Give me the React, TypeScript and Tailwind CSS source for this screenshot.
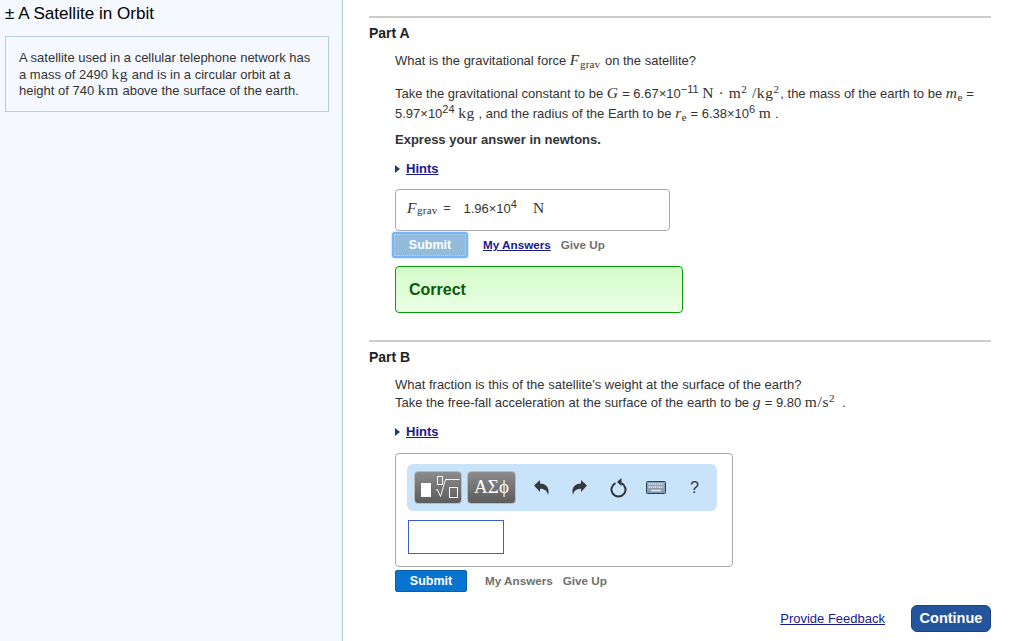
const serif = "font-['Liberation_Serif',serif]"

function M({ children, className = "" }: { children: React.ReactNode; className?: string }) {
  return <span className={`${serif} text-[15.5px] leading-none tracking-[0.6px] ${className}`}>{children}</span>
}

function Sup({ children }: { children: React.ReactNode }) {
  return <sup className="text-[11px] leading-none">{children}</sup>
}

function Sub({ children }: { children: React.ReactNode }) {
  return <sub className={`${serif} text-[11px] leading-none tracking-[0.2px]`}>{children}</sub>
}

function Hints({ className = "" }: { className?: string }) {
  return (
    <div className={`flex items-center font-bold text-[13px] leading-[16px] ${className}`}>
      <svg width="5" height="8" viewBox="0 0 5 8" className="mr-[6px]"><path d="M0 0l5 4-5 4z" fill="#1f3f66" /></svg>
      <a className="text-[#1a1a8c] underline">Hints</a>
    </div>
  )
}

function Undo({ flip = false }: { flip?: boolean }) {
  return (
    <svg width="15" height="15" viewBox="0 0 15 15" className={flip ? "-scale-x-100" : ""}>
      <path d="M0 5.500 6 0v3.400c5 0 8.600 3 8.600 8.100 0 1.200-.3 2.500-.7 3.500-.5-4.200-3.400-6.300-7.900-6.300v3.200z" fill="#333a40" />
    </svg>
  )
}

function MathButton({ children, className = "" }: { children: React.ReactNode; className?: string }) {
  return (
    <div className={`flex h-[33px] items-center justify-center rounded-[4px] border border-[#bbb] bg-gradient-to-b from-[#8c8c8c] to-[#5c5c5c] ${className}`}>
      {children}
    </div>
  )
}

export default function App() {
  return (
    <div className="flex h-[641px] w-[1014px] overflow-hidden bg-white font-['Liberation_Sans',sans-serif] text-[13px] text-[#333]">
      <aside className="w-[343px] shrink-0 border-r border-[#b5cde0] bg-[#f5f9ff] pl-[5px]">
        <h1 className="pt-[5px] text-[17.1px] leading-[18px] text-black">± A Satellite in Orbit</h1>
        <div className="mt-[13px] h-[76px] w-[324px] border border-[#b5cde0] pl-[13px] pt-[13px] leading-[15.5px]">
          A satellite used in a cellular telephone network has<br />
          a mass of 2490 <M>kg</M> and is in a circular orbit at a<br />
          height of 740 <M>km</M> above the surface of the earth.
        </div>
      </aside>

      <main className="w-[648px] pl-[26px] pt-[16px]">
        <section className="border-t-2 border-[#ccc] pt-[7px]">
          <h2 className="text-[14px] font-bold leading-[16px] text-[#222]">Part A</h2>
          <div className="pl-[26px]">
            <p className="mt-[10px] h-[20px] leading-[20px]">
              What is the gravitational force <M className="italic">F</M><Sub>grav</Sub> <span className="ml-[1px]">on the satellite?</span>
            </p>
            <p className="mt-[13px] w-[590px] leading-[20px]">
              Take the gravitational constant to be <M className="italic">G</M> = 6.67×10<Sup>−11</Sup> <M>N · m<Sup>2</Sup> /kg<Sup>2</Sup></M> <span className="-ml-[3px]">, the mass of the earth to be</span> <M className="italic">m</M><Sub>e</Sub> =<br />
              5.97×10<Sup>24</Sup> <M>kg</M> , and the radius of the Earth to be <M className="italic">r</M><Sub>e</Sub> = 6.38×10<Sup>6</Sup> <M>m</M> .
            </p>
            <p className="mt-[8px] font-bold leading-[16px]">Express your answer in newtons.</p>
            <Hints className="mt-[13px]" />
            <div className="mt-[12px] flex h-[42px] w-[275px] items-center rounded-[4px] border border-[#aaa] pb-[4px] pl-[11px]">
              <M className="italic">F</M><Sub>grav</Sub>
              <span className="ml-[6px] w-[20px] text-[12px]">=</span>
              <span className="relative top-[1px]">1.96×10<Sup>4</Sup></span>
              <M className="ml-[16px]">N</M>
            </div>
            <div className="-ml-[3px] mt-[1px] flex h-[26px] items-center text-[11.7px] font-bold">
              <button className="flex h-[26px] w-[76px] items-center justify-center rounded-[3px] border-2 border-[#76b6f8] bg-[#93bcdc] p-0 text-white shadow-[0_0_2px_#76b6f8]">
                <span className="flex h-full w-full items-center justify-center border border-dotted border-[#b8d4ea] text-[12.5px]">Submit</span>
              </button>
              <a className="ml-[15px] text-[#1a1a8c] underline">My Answers</a>
              <span className="ml-[10px] text-[#6f6f6f]">Give Up</span>
            </div>
            <div className="mt-[8px] flex h-[47px] w-[288px] items-center rounded-[4px] border border-[#0a9a0a] bg-gradient-to-b from-[#d3fbc8] to-[#eaffe6] pl-[13px] text-[16px] font-bold text-[#0b5a0b]">
              Correct
            </div>
          </div>
        </section>

        <section className="mt-[27px] border-t-2 border-[#ccc] pt-[7px]">
          <h2 className="text-[14px] font-bold leading-[16px] text-[#222]">Part B</h2>
          <div className="pl-[26px]">
            <p className="mt-[11px] leading-[18px]">
              What fraction is this of the satellite's weight at the surface of the earth?<br />
              Take the free-fall acceleration at the surface of the earth to be <M className="italic">g</M> = 9.80 <M>m/s<Sup>2</Sup></M> &nbsp;.
            </p>
            <Hints className="mt-[12px]" />
            <div className="mt-[13px] h-[114px] w-[338px] rounded-[4px] border border-[#aaa] pl-[11px] pt-[10px]">
              <div className="flex h-[47px] w-[310px] items-center rounded-[6px] bg-[#c9e3fb] pl-[7px]">
                <MathButton className="w-[48px]">
                  <svg width="46" height="31" viewBox="0 0 46 31" fill="none" stroke="#f4f4f4" strokeWidth="1">
                    <rect x="6" y="11" width="10" height="14" fill="#fff" stroke="none" />
                    <rect x="22.500" y="4.500" width="5" height="8" />
                    <path d="M21 18l1.500-.5 3 7 5-17h14" />
                    <rect x="34.500" y="15.500" width="8" height="10" />
                  </svg>
                </MathButton>
                <MathButton className={`ml-[5px] w-[49px] text-[19px] text-white ${serif}`}>ΑΣϕ</MathButton>
                <div className="ml-[18px]"><Undo /></div>
                <div className="ml-[23px]"><Undo flip /></div>
                <svg className="ml-[23px]" width="17" height="20" viewBox="0 0 17 20" fill="none">
                  <path d="M5.500 5.200a7 7 0 1 0 6 0" stroke="#2d3338" strokeWidth="2" />
                  <path d="M11.500 0v8l-4.500-4z" fill="#2d3338" />
                </svg>
                <svg className="ml-[19px]" width="20" height="13" viewBox="0 0 20 13">
                  <rect x="0.500" y="0.500" width="19" height="12" rx="1" fill="#8aa0b4" stroke="#2f4050" />
                  <path d="M2.500 3h15M2.500 6h15" stroke="#e8eef5" strokeWidth="1.400" strokeDasharray="1.400 .7" />
                  <path d="M5 9.500h10" stroke="#e8eef5" strokeWidth="1.400" />
                </svg>
                <span className="ml-[24px] text-[16px] text-[#333]">?</span>
              </div>
              <div className="ml-[1px] mt-[9px] h-[34px] w-[96px] border border-[#3a5fcd]" />
            </div>
            <div className="mt-[3px] flex h-[22px] items-center text-[11.7px] font-bold">
              <button className="flex h-[22px] w-[72px] items-center justify-center rounded-[2px] border border-[#0a5ca8] bg-[#0874d1] text-white">
                <span className="text-[12.5px]">Submit</span>
              </button>
              <span className="ml-[18px] text-[#6f6f6f]">My Answers</span>
              <span className="ml-[10px] text-[#6f6f6f]">Give Up</span>
            </div>
          </div>
        </section>

        <div className="mt-[13px] flex items-center justify-end">
          <a className="mr-[26px] text-[#1a1a8c] underline">Provide Feedback</a>
          <button className="h-[27px] w-[80px] rounded-[6px] border border-[#1c4480] bg-[#24559c] text-[14.5px] font-bold text-white">Continue</button>
        </div>
      </main>
    </div>
  )
}
